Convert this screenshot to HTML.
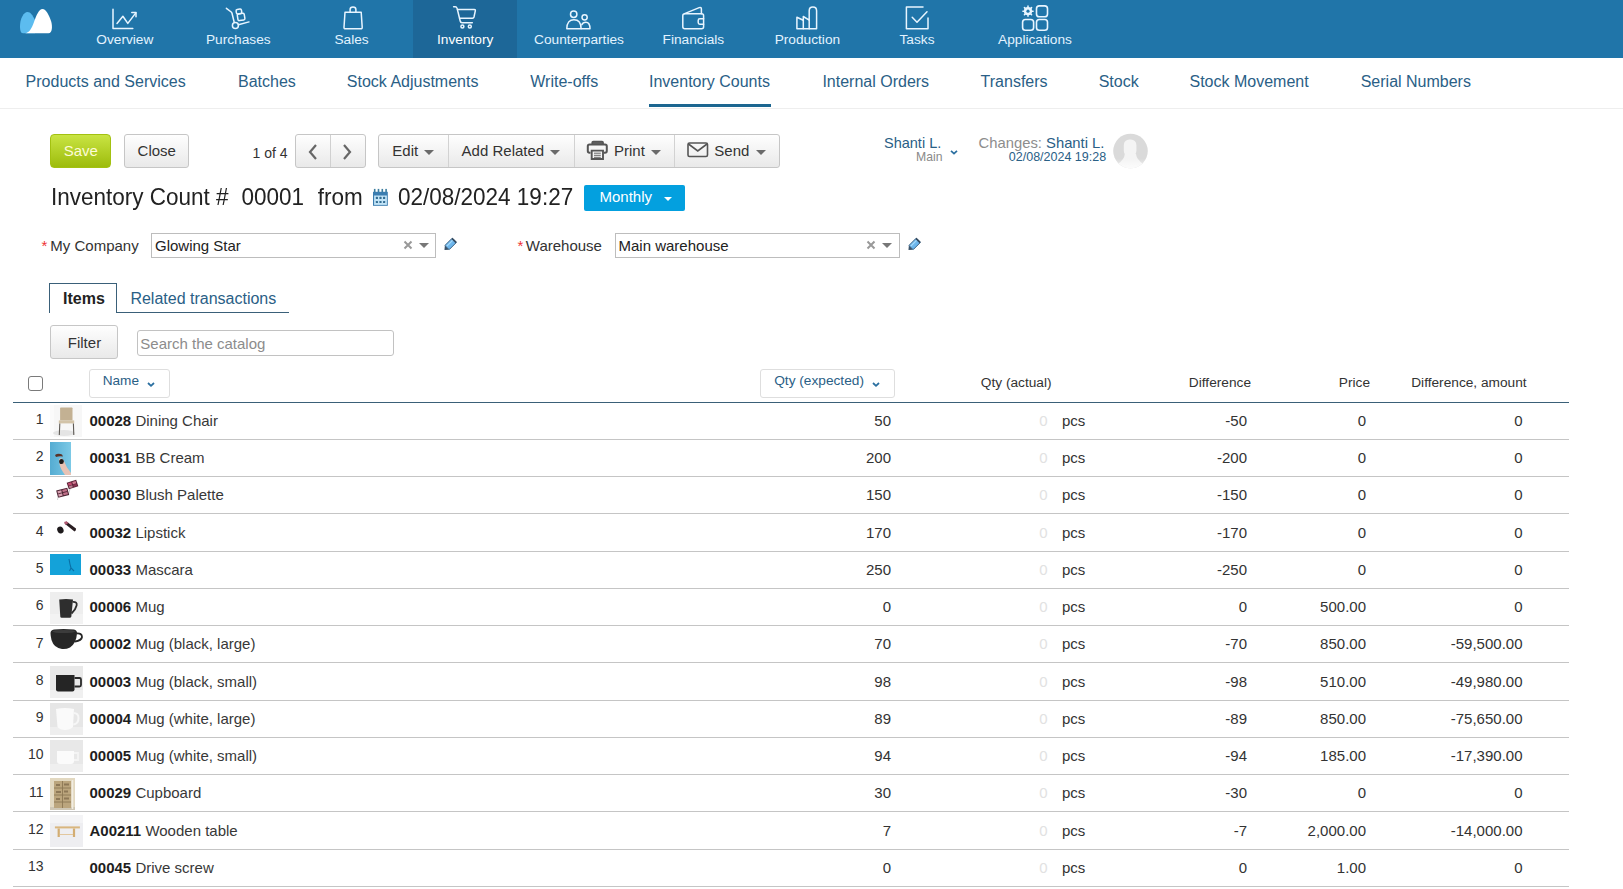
<!DOCTYPE html>
<html><head><meta charset="utf-8">
<style>
html,body{margin:0;padding:0;background:#fff;}
body{width:1623px;height:889px;overflow:hidden;position:relative;font-family:"Liberation Sans",sans-serif;color:#333;}
.a{position:absolute;line-height:1;white-space:nowrap;}
#hdr{position:absolute;left:0;top:0;width:1623px;height:58px;background:#2075a9;}
#act{position:absolute;left:413px;top:0;width:104px;height:58px;background:#1d6798;}
.nt{position:absolute;top:33.2px;font-size:13.7px;line-height:1;color:#e3f3ff;white-space:nowrap;transform:translateX(-50%);}
.ic{position:absolute;top:5px;width:26px;height:26px;overflow:visible;}
.ic *{fill:none;stroke:#e8f5ff;stroke-width:1.5;stroke-linecap:round;stroke-linejoin:round;}
.sn{position:absolute;top:74px;font-size:16px;line-height:1;color:#2a6086;white-space:nowrap;}
#snb{position:absolute;left:0;top:108px;width:1623px;height:1px;background:#eeeeee;}
.btn{position:absolute;box-sizing:border-box;border:1px solid #c6c6c6;border-radius:3px;background:linear-gradient(#fefefe,#e9e9e9);}
.car{position:absolute;width:0;height:0;border-left:5px solid transparent;border-right:5px solid transparent;border-top:5px solid #6a6a6a;}
.r{text-align:right;}
.bt{position:absolute;font-size:15px;line-height:1;color:#333;white-space:nowrap;}
</style></head><body>
<div id="hdr"></div>
<div id="act"></div>
<!-- logo -->
<svg style="position:absolute;left:20px;top:9px;width:33px;height:25px" viewBox="0 0 33 25">
<path d="M3,24.2 C0.5,24.2 0,21 0,17 C0,10 3.5,3 7.6,3 C10.5,3 12.5,6 15,11 L15,24.2 Z" fill="#5cbcef"/>
<path d="M5,24.2 C9,24 11.5,20 14,13 C16.5,6 19,0 22.5,0 C26,0 29,6 31.2,12.5 C32.5,17 32.5,24.2 28.5,24.2 Z" fill="#fff"/>
</svg>
<!-- nav icons -->
<svg class="ic" style="left:112px" viewBox="0 0 26 26"><path d="M1,4.3 V23.6 H20.8"/><path d="M5,18.4 L10.9,11.3 L15.8,18.4 L23.8,7.9"/><path d="M19.8,7.6 H24 V11.8"/></svg>
<svg class="ic" style="left:225px" viewBox="0 0 26 26"><path d="M1.4,3.3 L6.2,7 Q6.8,7.5 7,8.3 L9.2,17.3"/><circle cx="10.4" cy="20.6" r="3"/><path d="M13.4,19.8 L24,16.9"/><g transform="rotate(-9 16 10)"><rect x="11.8" y="3.9" width="5.4" height="4.6" rx="1.3"/><rect x="12.3" y="8.5" width="7" height="6.8" rx="1.3"/></g></svg>
<svg class="ic" style="left:338.6px" viewBox="0 0 26 26"><path d="M6,7.3 H22.2 L23.2,22.3 Q23.3,23.8 21.8,23.8 H6.4 Q4.9,23.8 5,22.3 Z"/><path d="M11.1,7.3 V4.6 Q11.1,2.1 14,2.1 Q16.9,2.1 16.9,4.6 V7.3"/></svg>
<svg class="ic" style="left:452.2px" viewBox="0 0 26 26"><path d="M1.6,1.7 H3.2 Q4.6,1.7 5.1,3.4 L8.2,16 Q8.5,17.7 10,17.7 H20.3"/><path d="M5.5,4.4 H22.3 Q23.6,4.4 23.3,5.8 L22,12 Q21.7,13.2 20.5,13.2 H7.6"/><circle cx="10.4" cy="21.4" r="1.5"/><circle cx="17.8" cy="21.4" r="1.5"/></svg>
<svg class="ic" style="left:566px" viewBox="0 0 26 26"><circle cx="7.7" cy="9.3" r="3.2"/><path d="M0.8,23.8 C0.8,17.5 3.6,14.7 7.95,14.7 C12.3,14.7 15.1,17.5 15.1,23.8 Z"/><circle cx="18.6" cy="12.3" r="2.6"/><path d="M15.3,23.8 H24 C24,19.5 22.6,17.2 19.8,17.2 C18,17.2 16.6,18 15.9,19.6"/></svg>
<svg class="ic" style="left:680.4px" viewBox="0 0 26 26"><rect x="2.8" y="8.8" width="20.8" height="15" rx="2"/><path d="M4.6,8.6 L19.2,2.6 Q21.4,1.9 21.4,4.1 V8.8"/><path d="M23.6,13.7 H19.8 Q18.2,13.7 18.2,15.4 V17.5 Q18.2,19.2 19.8,19.2 H23.6"/></svg>
<svg class="ic" style="left:794.4px" viewBox="0 0 26 26"><path d="M2.9,23.8 V12.3 L9.3,15.2 V11.5 L15.2,15.2 V5.8 Q15.2,2.1 18.9,2.1 Q22.6,2.1 22.6,5.8 V23.8 Z"/><path d="M9.3,15.2 V23.8 M15.2,15.2 V23.8"/></svg>
<svg class="ic" style="left:904px" viewBox="0 0 26 26"><path d="M19,2.1 H2.4 V23.8 H24 V13"/><path d="M8.2,12.3 L13,17.2 L23,6.8"/></svg>
<svg class="ic" style="left:1022px" viewBox="0 0 26 26"><rect x="14.5" y="0.9" width="11" height="10.8" rx="2.8" style="stroke-width:1.6"/><rect x="0.6" y="14.5" width="11" height="10.8" rx="2.8" style="stroke-width:1.6"/><rect x="14.5" y="14.5" width="11" height="10.8" rx="2.8" style="stroke-width:1.6"/>
<g transform="translate(6,6.2)"><circle r="4.1" style="fill:#e8f5ff;stroke:none"/><g style="stroke:#e8f5ff;stroke-width:2.5;stroke-linecap:butt"><path d="M0,-5.1 V5.1 M-5.1,0 H5.1 M-3.6,-3.6 L3.6,3.6 M-3.6,3.6 L3.6,-3.6"/></g><circle r="1.6" style="fill:#2075a9;stroke:none"/></g></svg>
<div class="nt" style="left:124.8px">Overview</div>
<div class="nt" style="left:238.3px">Purchases</div>
<div class="nt" style="left:351.6px">Sales</div>
<div class="nt" style="left:465.2px;color:#fff">Inventory</div>
<div class="nt" style="left:579px">Counterparties</div>
<div class="nt" style="left:693.4px">Financials</div>
<div class="nt" style="left:807.4px">Production</div>
<div class="nt" style="left:917px">Tasks</div>
<div class="nt" style="left:1035px">Applications</div>
<!-- subnav -->
<div class="sn" style="left:25.6px">Products and Services</div>
<div class="sn" style="left:238px">Batches</div>
<div class="sn" style="left:346.8px">Stock Adjustments</div>
<div class="sn" style="left:530.3px">Write-offs</div>
<div class="sn" style="left:649px">Inventory Counts</div>
<div class="sn" style="left:822.4px">Internal Orders</div>
<div class="sn" style="left:980.6px">Transfers</div>
<div class="sn" style="left:1098.7px">Stock</div>
<div class="sn" style="left:1189.5px">Stock Movement</div>
<div class="sn" style="left:1360.7px">Serial Numbers</div>
<div style="position:absolute;left:649px;top:104px;width:122px;height:3px;background:#1c6690"></div>
<div id="snb"></div>
<!--TOOLBAR-->
<div style="position:absolute;left:50px;top:134px;width:61px;height:34px;box-sizing:border-box;border:1px solid #a3c111;border-radius:4px;background:linear-gradient(#c9e443,#9dbc0c)"></div>
<div class="bt" style="left:63.7px;top:143px;color:#fdfbd6">Save</div>
<div class="btn" style="left:124px;top:134px;width:65px;height:34px"></div>
<div class="bt" style="left:137.6px;top:143px">Close</div>
<div class="a" style="left:252.6px;top:145.6px;font-size:14px;color:#333">1 of 4</div>
<div class="btn" style="left:295px;top:134px;width:71px;height:34px"></div>
<div style="position:absolute;left:330px;top:135px;width:1px;height:32px;background:#d0d0d0"></div>
<svg style="position:absolute;left:306px;top:143px;width:14px;height:18px" viewBox="0 0 14 18"><path d="M10,2 L4,9 L10,16" fill="none" stroke="#666" stroke-width="2.2"/></svg>
<svg style="position:absolute;left:340px;top:143px;width:14px;height:18px" viewBox="0 0 14 18"><path d="M4,2 L10,9 L4,16" fill="none" stroke="#666" stroke-width="2.2"/></svg>
<div class="btn" style="left:378px;top:134px;width:402px;height:34px"></div>
<div style="position:absolute;left:448px;top:135px;width:1px;height:32px;background:#d2d2d2"></div>
<div style="position:absolute;left:574px;top:135px;width:1px;height:32px;background:#d2d2d2"></div>
<div style="position:absolute;left:674px;top:135px;width:1px;height:32px;background:#d2d2d2"></div>
<div class="bt" style="left:392.3px;top:143.3px">Edit</div>
<div class="car" style="left:424px;top:150px"></div>
<div class="bt" style="left:461.6px;top:143.3px">Add Related</div>
<div class="car" style="left:550.4px;top:150px"></div>
<svg style="position:absolute;left:586px;top:140px;width:22px;height:21px" viewBox="0 0 22 21"><path d="M6.3,4.2 V2.6 Q6.3,1.6 7.3,1.6 H16 Q17,1.6 17,2.6 V4.2" fill="#666" stroke="#555" stroke-width="1.8"/><path d="M4.5,12.8 H3.6 Q1.8,12.8 1.8,11 V6.2 Q1.8,4.4 3.6,4.4 H19 Q20.8,4.4 20.8,6.2 V11 Q20.8,12.8 19,12.8 H18" fill="none" stroke="#555" stroke-width="2"/><path d="M5.7,10.6 H17 V19 H5.7 Z" fill="#f4f4f4" stroke="#555" stroke-width="1.9"/><path d="M8,13.2 H14.8 M8,15.3 H14.8 M8,17.3 H14.8" stroke="#666" stroke-width="1"/></svg>
<div class="bt" style="left:614px;top:143.3px">Print</div>
<div class="car" style="left:651px;top:150px"></div>
<svg style="position:absolute;left:687px;top:142px;width:22px;height:16px" viewBox="0 0 22 16"><rect x="1" y="1" width="19.5" height="13.5" rx="1.5" fill="none" stroke="#555" stroke-width="1.6"/><path d="M1.5,2 L10.75,9 L20,2" fill="none" stroke="#555" stroke-width="1.6"/></svg>
<div class="bt" style="left:714.3px;top:143.3px">Send</div>
<div class="car" style="left:756px;top:150px"></div>
<div class="a" style="left:884px;top:136px;font-size:14.5px;color:#2a6086">Shanti L.</div>
<div class="a" style="left:916px;top:151px;font-size:12.2px;color:#8a8a8a">Main</div>
<svg style="position:absolute;left:949px;top:148.5px;width:10px;height:7px" viewBox="0 0 10 7"><path d="M2,1.8 L5,4.6 L8,1.8" fill="none" stroke="#2a6fa0" stroke-width="1.7"/></svg>
<div class="a" style="left:978.6px;top:135.8px;font-size:14.8px;color:#8d8d8d">Changes: <span style="color:#2a6086">Shanti L.</span></div>
<div class="a" style="left:1008.8px;top:151.2px;font-size:12.5px;color:#2a6086">02/08/2024 19:28</div>
<svg style="position:absolute;left:1112px;top:133px;width:37px;height:37px" viewBox="0 0 37 37"><defs><clipPath id="avc"><circle cx="18.5" cy="18" r="17.3"/></clipPath><linearGradient id="avg" x1="0" y1="0" x2="0" y2="1"><stop offset="0" stop-color="#fff" stop-opacity="0"/><stop offset="0.7" stop-color="#fff" stop-opacity="0"/><stop offset="1" stop-color="#fff" stop-opacity="0.85"/></linearGradient></defs>
<g clip-path="url(#avc)"><rect width="37" height="37" fill="#dadada"/><rect x="11.8" y="6.5" width="12.6" height="17" rx="5.5" fill="#f4f4f4"/><path d="M12.8,21 Q12.5,26 6,31 Q4,36 18.5,37 Q33,36 31,31 Q24.5,26 24,21 Z" fill="#f4f4f4"/><rect width="37" height="37" fill="url(#avg)"/></g></svg>

<!--FORM-->
<div class="a" style="left:51px;top:186px;font-size:22.5px;color:#222;transform:scaleY(1.1);transform-origin:0 10.3px">Inventory Count #</div>
<div class="a" style="left:241.5px;top:186px;font-size:22.5px;color:#222;transform:scaleY(1.1);transform-origin:0 10.3px">00001</div>
<div class="a" style="left:317.7px;top:186px;font-size:22.5px;color:#222;transform:scaleY(1.1);transform-origin:0 10.3px">from</div>
<svg style="position:absolute;left:373px;top:188px;width:15px;height:18px" viewBox="0 0 15 18"><rect x="0" y="3.8" width="14.8" height="14" fill="#3b7db0"/><rect x="1.1" y="7.5" width="12.8" height="9.4" fill="#c2e4f7"/><g fill="#3b7d9f"><rect x="0.9" y="0.9" width="1.6" height="3.2"/><rect x="4.7" y="0.9" width="1.6" height="3.2"/><rect x="8.5" y="0.9" width="1.6" height="3.2"/><rect x="12.3" y="0.9" width="1.6" height="3.2"/></g><g fill="#336d93"><rect x="2.8" y="8.8" width="2.2" height="2.2" rx="0.6"/><rect x="6.4" y="8.8" width="2.2" height="2.2" rx="0.6"/><rect x="10" y="8.8" width="2.2" height="2.2" rx="0.6"/><rect x="2.8" y="12.9" width="2.2" height="2.2" rx="0.6"/><rect x="6.4" y="12.9" width="2.2" height="2.2" rx="0.6"/><rect x="10" y="12.9" width="2.2" height="2.2" rx="0.6"/></g></svg>
<div class="a" style="left:398px;top:186px;font-size:22.5px;color:#222;transform:scaleY(1.1);transform-origin:0 10.3px">02/08/2024 19:27</div>
<div style="position:absolute;left:584px;top:185px;width:101px;height:26px;background:#03a0df;border-radius:2px"></div>
<div class="a" style="left:599.5px;top:189px;font-size:15px;color:#fff">Monthly</div>
<div class="car" style="left:663.5px;top:196.5px;border-top-color:#fff;border-left-width:4.5px;border-right-width:4.5px;border-top-width:4.5px"></div>
<div class="a" style="left:41.4px;top:238px;font-size:15px;color:#e33">*</div>
<div class="a" style="left:50.3px;top:238px;font-size:15px;color:#333">My Company</div>
<div style="position:absolute;left:151px;top:233px;width:285px;height:25px;box-sizing:border-box;border:1px solid #bdbdbd;background:#fff"></div>
<div class="a" style="left:155px;top:238px;font-size:15px;color:#222">Glowing Star</div>
<svg style="position:absolute;left:403px;top:240px;width:10px;height:10px" viewBox="0 0 10 10"><path d="M1.5,1.5 L8.5,8.5 M8.5,1.5 L1.5,8.5" stroke="#999" stroke-width="2"/></svg>
<div class="car" style="left:419px;top:242.5px;border-top-color:#777;border-top-width:5px"></div>
<svg style="position:absolute;left:436px;top:230px;width:30px;height:30px" viewBox="0 0 30 30"><g transform="translate(13.8,14.8) rotate(-45)"><defs></defs><rect x="-4" y="-3" width="10.5" height="6" rx="0.8" fill="#6db6ec" stroke="#3a5f80" stroke-width="0.9"/><path d="M-4,-3 L-7.5,0 L-4,3 Z" fill="#38526a"/><path d="M-3,-1.2 H5.5" stroke="#a9dcfa" stroke-width="1.2"/><rect x="5.2" y="-3" width="1.6" height="6" fill="#34495e"/></g></svg>
<div class="a" style="left:517.6px;top:238px;font-size:15px;color:#e33">*</div>
<div class="a" style="left:525.8px;top:238px;font-size:15px;color:#333">Warehouse</div>
<div style="position:absolute;left:615px;top:233px;width:285px;height:25px;box-sizing:border-box;border:1px solid #bdbdbd;background:#fff"></div>
<div class="a" style="left:618.5px;top:238px;font-size:15px;color:#222">Main warehouse</div>
<svg style="position:absolute;left:866px;top:240px;width:10px;height:10px" viewBox="0 0 10 10"><path d="M1.5,1.5 L8.5,8.5 M8.5,1.5 L1.5,8.5" stroke="#999" stroke-width="2"/></svg>
<div class="car" style="left:882px;top:242.5px;border-top-color:#777;border-top-width:5px"></div>
<svg style="position:absolute;left:900px;top:230px;width:30px;height:30px" viewBox="0 0 30 30"><g transform="translate(13.8,14.8) rotate(-45)"><defs></defs><rect x="-4" y="-3" width="10.5" height="6" rx="0.8" fill="#6db6ec" stroke="#3a5f80" stroke-width="0.9"/><path d="M-4,-3 L-7.5,0 L-4,3 Z" fill="#38526a"/><path d="M-3,-1.2 H5.5" stroke="#a9dcfa" stroke-width="1.2"/><rect x="5.2" y="-3" width="1.6" height="6" fill="#34495e"/></g></svg>
<!-- tabs -->
<div style="position:absolute;left:49px;top:283px;width:68px;height:30px;box-sizing:border-box;border:1px solid #3a6079;border-bottom:none;background:#fff"></div>
<div style="position:absolute;left:116px;top:312px;width:173px;height:1px;background:#3a6079"></div>
<div class="a" style="left:63px;top:291px;font-size:16px;font-weight:bold;color:#222">Items</div>
<div class="a" style="left:130.4px;top:291px;font-size:16px;color:#2a6086">Related transactions</div>
<div class="btn" style="left:50px;top:325px;width:68px;height:34px"></div>
<div class="bt" style="left:67.8px;top:335px">Filter</div>
<div style="position:absolute;left:137px;top:330px;width:257px;height:26px;box-sizing:border-box;border:1px solid #c2c2c2;border-radius:3px;background:#fff"></div>
<div class="a" style="left:140.3px;top:336px;font-size:15px;color:#8c8c8c">Search the catalog</div>
<!-- header -->
<div style="position:absolute;left:28px;top:376px;width:15px;height:15px;box-sizing:border-box;border:1px solid #7a7a7a;border-radius:3px;background:#fff"></div>
<div style="position:absolute;left:89px;top:369px;width:81px;height:29px;box-sizing:border-box;border:1px solid #dedede;border-radius:3px"></div>
<div class="a" style="left:102.7px;top:374px;font-size:13.6px;color:#2a6086">Name</div>
<svg style="position:absolute;left:146px;top:381px;width:10px;height:7px" viewBox="0 0 10 7"><path d="M2,2 L5,4.8 L8,2" fill="none" stroke="#2a6fa0" stroke-width="1.8"/></svg>
<div style="position:absolute;left:760px;top:369px;width:135px;height:29px;box-sizing:border-box;border:1px solid #dedede;border-radius:3px"></div>
<div class="a" style="left:774.2px;top:374px;font-size:13.7px;color:#2a6086">Qty (expected)</div>
<svg style="position:absolute;left:871px;top:381px;width:10px;height:7px" viewBox="0 0 10 7"><path d="M2,2 L5,4.8 L8,2" fill="none" stroke="#2a6fa0" stroke-width="1.8"/></svg>
<div class="a" style="left:980.8px;top:375.5px;font-size:13.7px;color:#333">Qty (actual)</div>
<div class="a r" style="right:372px;top:375.5px;font-size:13.7px;color:#333">Difference</div>
<div class="a r" style="right:253px;top:375.5px;font-size:13.7px;color:#333">Price</div>
<div class="a r" style="right:96.4px;top:375.5px;font-size:13.7px;color:#333">Difference, amount</div>
<div style="position:absolute;left:13px;top:402px;width:1556px;height:1px;background:#3a6078"></div>

<!--TABLE-->
<div style="position:absolute;left:13px;top:439.00px;width:1556px;height:1px;background:#c5c5c5"></div>
<div class="a r" style="right:1579.5px;top:412.15px;font-size:14px">1</div>
<div class="a" style="left:89.5px;top:412.90px;font-size:15px;color:#383838"><b style="color:#1e1e1e">00028</b> Dining Chair</div>
<div class="a r" style="right:732.0px;top:412.90px;font-size:15px">50</div>
<div class="a r" style="right:575.5px;top:412.90px;font-size:15px;color:#e2e2e2">0</div>
<div class="a" style="left:1062px;top:412.90px;font-size:15px">pcs</div>
<div class="a r" style="right:376.0px;top:412.90px;font-size:15px">-50</div>
<div class="a r" style="right:257.0px;top:412.90px;font-size:15px">0</div>
<div class="a r" style="right:100.5px;top:412.90px;font-size:15px">0</div>
<div style="position:absolute;left:13px;top:476.00px;width:1556px;height:1px;background:#c5c5c5"></div>
<div class="a r" style="right:1579.5px;top:449.40px;font-size:14px">2</div>
<div class="a" style="left:89.5px;top:450.15px;font-size:15px;color:#383838"><b style="color:#1e1e1e">00031</b> BB Cream</div>
<div class="a r" style="right:732.0px;top:450.15px;font-size:15px">200</div>
<div class="a r" style="right:575.5px;top:450.15px;font-size:15px;color:#e2e2e2">0</div>
<div class="a" style="left:1062px;top:450.15px;font-size:15px">pcs</div>
<div class="a r" style="right:376.0px;top:450.15px;font-size:15px">-200</div>
<div class="a r" style="right:257.0px;top:450.15px;font-size:15px">0</div>
<div class="a r" style="right:100.5px;top:450.15px;font-size:15px">0</div>
<div style="position:absolute;left:13px;top:513.00px;width:1556px;height:1px;background:#c5c5c5"></div>
<div class="a r" style="right:1579.5px;top:486.65px;font-size:14px">3</div>
<div class="a" style="left:89.5px;top:487.40px;font-size:15px;color:#383838"><b style="color:#1e1e1e">00030</b> Blush Palette</div>
<div class="a r" style="right:732.0px;top:487.40px;font-size:15px">150</div>
<div class="a r" style="right:575.5px;top:487.40px;font-size:15px;color:#e2e2e2">0</div>
<div class="a" style="left:1062px;top:487.40px;font-size:15px">pcs</div>
<div class="a r" style="right:376.0px;top:487.40px;font-size:15px">-150</div>
<div class="a r" style="right:257.0px;top:487.40px;font-size:15px">0</div>
<div class="a r" style="right:100.5px;top:487.40px;font-size:15px">0</div>
<div style="position:absolute;left:13px;top:551.00px;width:1556px;height:1px;background:#c5c5c5"></div>
<div class="a r" style="right:1579.5px;top:523.90px;font-size:14px">4</div>
<div class="a" style="left:89.5px;top:524.65px;font-size:15px;color:#383838"><b style="color:#1e1e1e">00032</b> Lipstick</div>
<div class="a r" style="right:732.0px;top:524.65px;font-size:15px">170</div>
<div class="a r" style="right:575.5px;top:524.65px;font-size:15px;color:#e2e2e2">0</div>
<div class="a" style="left:1062px;top:524.65px;font-size:15px">pcs</div>
<div class="a r" style="right:376.0px;top:524.65px;font-size:15px">-170</div>
<div class="a r" style="right:257.0px;top:524.65px;font-size:15px">0</div>
<div class="a r" style="right:100.5px;top:524.65px;font-size:15px">0</div>
<div style="position:absolute;left:13px;top:588.00px;width:1556px;height:1px;background:#c5c5c5"></div>
<div class="a r" style="right:1579.5px;top:561.15px;font-size:14px">5</div>
<div class="a" style="left:89.5px;top:561.90px;font-size:15px;color:#383838"><b style="color:#1e1e1e">00033</b> Mascara</div>
<div class="a r" style="right:732.0px;top:561.90px;font-size:15px">250</div>
<div class="a r" style="right:575.5px;top:561.90px;font-size:15px;color:#e2e2e2">0</div>
<div class="a" style="left:1062px;top:561.90px;font-size:15px">pcs</div>
<div class="a r" style="right:376.0px;top:561.90px;font-size:15px">-250</div>
<div class="a r" style="right:257.0px;top:561.90px;font-size:15px">0</div>
<div class="a r" style="right:100.5px;top:561.90px;font-size:15px">0</div>
<div style="position:absolute;left:13px;top:625.00px;width:1556px;height:1px;background:#c5c5c5"></div>
<div class="a r" style="right:1579.5px;top:598.40px;font-size:14px">6</div>
<div class="a" style="left:89.5px;top:599.15px;font-size:15px;color:#383838"><b style="color:#1e1e1e">00006</b> Mug</div>
<div class="a r" style="right:732.0px;top:599.15px;font-size:15px">0</div>
<div class="a r" style="right:575.5px;top:599.15px;font-size:15px;color:#e2e2e2">0</div>
<div class="a" style="left:1062px;top:599.15px;font-size:15px">pcs</div>
<div class="a r" style="right:376.0px;top:599.15px;font-size:15px">0</div>
<div class="a r" style="right:257.0px;top:599.15px;font-size:15px">500.00</div>
<div class="a r" style="right:100.5px;top:599.15px;font-size:15px">0</div>
<div style="position:absolute;left:13px;top:662.00px;width:1556px;height:1px;background:#c5c5c5"></div>
<div class="a r" style="right:1579.5px;top:635.65px;font-size:14px">7</div>
<div class="a" style="left:89.5px;top:636.40px;font-size:15px;color:#383838"><b style="color:#1e1e1e">00002</b> Mug (black, large)</div>
<div class="a r" style="right:732.0px;top:636.40px;font-size:15px">70</div>
<div class="a r" style="right:575.5px;top:636.40px;font-size:15px;color:#e2e2e2">0</div>
<div class="a" style="left:1062px;top:636.40px;font-size:15px">pcs</div>
<div class="a r" style="right:376.0px;top:636.40px;font-size:15px">-70</div>
<div class="a r" style="right:257.0px;top:636.40px;font-size:15px">850.00</div>
<div class="a r" style="right:100.5px;top:636.40px;font-size:15px">-59,500.00</div>
<div style="position:absolute;left:13px;top:700.00px;width:1556px;height:1px;background:#c5c5c5"></div>
<div class="a r" style="right:1579.5px;top:672.90px;font-size:14px">8</div>
<div class="a" style="left:89.5px;top:673.65px;font-size:15px;color:#383838"><b style="color:#1e1e1e">00003</b> Mug (black, small)</div>
<div class="a r" style="right:732.0px;top:673.65px;font-size:15px">98</div>
<div class="a r" style="right:575.5px;top:673.65px;font-size:15px;color:#e2e2e2">0</div>
<div class="a" style="left:1062px;top:673.65px;font-size:15px">pcs</div>
<div class="a r" style="right:376.0px;top:673.65px;font-size:15px">-98</div>
<div class="a r" style="right:257.0px;top:673.65px;font-size:15px">510.00</div>
<div class="a r" style="right:100.5px;top:673.65px;font-size:15px">-49,980.00</div>
<div style="position:absolute;left:13px;top:737.00px;width:1556px;height:1px;background:#c5c5c5"></div>
<div class="a r" style="right:1579.5px;top:710.15px;font-size:14px">9</div>
<div class="a" style="left:89.5px;top:710.90px;font-size:15px;color:#383838"><b style="color:#1e1e1e">00004</b> Mug (white, large)</div>
<div class="a r" style="right:732.0px;top:710.90px;font-size:15px">89</div>
<div class="a r" style="right:575.5px;top:710.90px;font-size:15px;color:#e2e2e2">0</div>
<div class="a" style="left:1062px;top:710.90px;font-size:15px">pcs</div>
<div class="a r" style="right:376.0px;top:710.90px;font-size:15px">-89</div>
<div class="a r" style="right:257.0px;top:710.90px;font-size:15px">850.00</div>
<div class="a r" style="right:100.5px;top:710.90px;font-size:15px">-75,650.00</div>
<div style="position:absolute;left:13px;top:774.00px;width:1556px;height:1px;background:#c5c5c5"></div>
<div class="a r" style="right:1579.5px;top:747.40px;font-size:14px">10</div>
<div class="a" style="left:89.5px;top:748.15px;font-size:15px;color:#383838"><b style="color:#1e1e1e">00005</b> Mug (white, small)</div>
<div class="a r" style="right:732.0px;top:748.15px;font-size:15px">94</div>
<div class="a r" style="right:575.5px;top:748.15px;font-size:15px;color:#e2e2e2">0</div>
<div class="a" style="left:1062px;top:748.15px;font-size:15px">pcs</div>
<div class="a r" style="right:376.0px;top:748.15px;font-size:15px">-94</div>
<div class="a r" style="right:257.0px;top:748.15px;font-size:15px">185.00</div>
<div class="a r" style="right:100.5px;top:748.15px;font-size:15px">-17,390.00</div>
<div style="position:absolute;left:13px;top:811.00px;width:1556px;height:1px;background:#c5c5c5"></div>
<div class="a r" style="right:1579.5px;top:784.65px;font-size:14px">11</div>
<div class="a" style="left:89.5px;top:785.40px;font-size:15px;color:#383838"><b style="color:#1e1e1e">00029</b> Cupboard</div>
<div class="a r" style="right:732.0px;top:785.40px;font-size:15px">30</div>
<div class="a r" style="right:575.5px;top:785.40px;font-size:15px;color:#e2e2e2">0</div>
<div class="a" style="left:1062px;top:785.40px;font-size:15px">pcs</div>
<div class="a r" style="right:376.0px;top:785.40px;font-size:15px">-30</div>
<div class="a r" style="right:257.0px;top:785.40px;font-size:15px">0</div>
<div class="a r" style="right:100.5px;top:785.40px;font-size:15px">0</div>
<div style="position:absolute;left:13px;top:849.00px;width:1556px;height:1px;background:#c5c5c5"></div>
<div class="a r" style="right:1579.5px;top:821.90px;font-size:14px">12</div>
<div class="a" style="left:89.5px;top:822.65px;font-size:15px;color:#383838"><b style="color:#1e1e1e">A00211</b> Wooden table</div>
<div class="a r" style="right:732.0px;top:822.65px;font-size:15px">7</div>
<div class="a r" style="right:575.5px;top:822.65px;font-size:15px;color:#e2e2e2">0</div>
<div class="a" style="left:1062px;top:822.65px;font-size:15px">pcs</div>
<div class="a r" style="right:376.0px;top:822.65px;font-size:15px">-7</div>
<div class="a r" style="right:257.0px;top:822.65px;font-size:15px">2,000.00</div>
<div class="a r" style="right:100.5px;top:822.65px;font-size:15px">-14,000.00</div>
<div style="position:absolute;left:13px;top:886.00px;width:1556px;height:1px;background:#c5c5c5"></div>
<div class="a r" style="right:1579.5px;top:859.15px;font-size:14px">13</div>
<div class="a" style="left:89.5px;top:859.90px;font-size:15px;color:#383838"><b style="color:#1e1e1e">00045</b> Drive screw</div>
<div class="a r" style="right:732.0px;top:859.90px;font-size:15px">0</div>
<div class="a r" style="right:575.5px;top:859.90px;font-size:15px;color:#e2e2e2">0</div>
<div class="a" style="left:1062px;top:859.90px;font-size:15px">pcs</div>
<div class="a r" style="right:376.0px;top:859.90px;font-size:15px">0</div>
<div class="a r" style="right:257.0px;top:859.90px;font-size:15px">1.00</div>
<div class="a r" style="right:100.5px;top:859.90px;font-size:15px">0</div>
<!--/TABLE-->
<!--THUMBS-->
<svg style="position:absolute;left:50px;top:405px;width:32px;height:32px;filter:blur(0.35px)" viewBox="0 0 32 32">
<rect width="32" height="32" fill="#f7f7f7"/><rect x="0" y="0" width="4" height="32" fill="#fbfbfb"/>
<ellipse cx="14" cy="28" rx="11" ry="3" fill="#e4e4e4"/>
<path d="M10.1,3.2 Q10.1,2.6 10.8,2.6 H21.8 Q22.5,2.6 22.5,3.2 V15.4 H10.1 Z" fill="#c3b193"/>
<path d="M8.8,15.4 H24.2 V18.4 H8.8 Z" fill="#d2c3a8"/>
<path d="M9.8,18.4 L9.3,30 M23.4,18.4 L23.8,30" stroke="#5e5a55" stroke-width="1.1"/>
</svg>
<svg style="position:absolute;left:50px;top:442px;width:21px;height:33px;filter:blur(0.3px)" viewBox="0 0 21 33">
<defs><linearGradient id="bbg" x1="0" y1="0" x2="1" y2="0"><stop offset="0" stop-color="#55acd2"/><stop offset="1" stop-color="#7cc9e6"/></linearGradient></defs>
<rect width="21" height="33" fill="url(#bbg)"/>
<path d="M9,17 Q12,15 14,19 Q16,25 21,31 V33 H15 Q10,26 9.5,22 Z" fill="#e7c3b5"/>
<path d="M5,13 Q8,11 12,12.5 L13,14.5 Q9,14 6,15 Z" fill="#5a3328"/>
<ellipse cx="11.5" cy="19.5" rx="2.3" ry="2.6" fill="#1c1c1c"/>
</svg>
<svg style="position:absolute;left:50px;top:477px;width:32px;height:26px;filter:blur(0.3px)" viewBox="0 0 32 26">
<g transform="rotate(-18 22.5 7.5)"><rect x="17.5" y="4" width="10" height="7" fill="#5a2236"/><rect x="18.5" y="5" width="3.5" height="2.5" fill="#c04a6e"/><rect x="23" y="5" width="3.5" height="2.5" fill="#d27a92"/><rect x="18.5" y="8" width="3.5" height="2.2" fill="#b88090"/><rect x="23" y="8" width="3.5" height="2.2" fill="#8a3050"/></g>
<path d="M20,12 L18.5,17" stroke="#bbb" stroke-width="0.8"/>
<g transform="rotate(-15 12.7 16)"><rect x="7" y="12" width="11.5" height="7.5" fill="#4a2232"/><rect x="8" y="13" width="4" height="5.5" fill="#d8a0b0"/><rect x="13" y="13" width="4.5" height="5.5" fill="#c07088"/><path d="M8,15.7 H17.5" stroke="#4a2232" stroke-width="0.8"/></g>
<path d="M8,20 L7.5,23" stroke="#ccc" stroke-width="0.8"/>
</svg>
<svg style="position:absolute;left:50px;top:517px;width:32px;height:22px;filter:blur(0.35px)" viewBox="0 0 32 22">
<ellipse cx="10.4" cy="13" rx="3.1" ry="3.5" fill="#1e1a1c" transform="rotate(-25 10.4 13)"/>
<path d="M14.5,6.5 L16.5,4.5 L26,11.5 Q26.5,13.5 24.5,14.5 Z" fill="#2a1e22"/>
<path d="M14,5 L16.5,4.2 L18.5,6 L15.5,8 Z" fill="#b05a72"/>
</svg>
<svg style="position:absolute;left:50px;top:554px;width:31px;height:21px;filter:blur(0.3px)" viewBox="0 0 31 21">
<rect width="31" height="21" fill="#14a2d9"/><path d="M19,5 Q20,11 21,14 L24,17 M21,14 L19.5,17" stroke="#0b6fa5" stroke-width="1.1" fill="none"/>
</svg>
<svg style="position:absolute;left:50px;top:591.5px;width:33px;height:32px;filter:blur(0.3px)" viewBox="0 0 33 32">
<rect width="33" height="32" fill="#eeeeee"/><rect x="0" y="22" width="33" height="10" fill="#f3f3f3"/>
<path d="M9.2,7.5 Q16,6.5 23,7.5 L21.3,24.8 Q21,25.8 19.8,25.8 H11.6 Q10.4,25.8 10.3,24.8 Z" fill="#2e2e2e"/>
<path d="M22.6,9.8 Q27.5,9.5 26.6,13.5 Q25.5,18 21.5,21.5" stroke="#2e2e2e" stroke-width="1.8" fill="none"/>
</svg>
<svg style="position:absolute;left:50px;top:628px;width:33px;height:22px;filter:blur(0.3px)" viewBox="0 0 33 22">
<path d="M0.5,5 Q0.5,2 4,1.5 Q13,0.3 24,1.5 Q27,2 27,5 Q26.5,15 20,19.5 Q16,21.5 12,21 Q4,20 1.5,12 Q0.5,8 0.5,5Z" fill="#262626"/>
<path d="M26.5,5.5 Q32,5 32,9 Q31.5,12.5 25,13.5" stroke="#262626" stroke-width="1.8" fill="none"/>
<ellipse cx="13.8" cy="3.5" rx="11.5" ry="1.6" fill="#3c3c3c"/>
</svg>
<svg style="position:absolute;left:50px;top:666px;width:33px;height:32px;filter:blur(0.3px)" viewBox="0 0 33 32">
<rect width="33" height="32" fill="#e9e9e9"/><rect y="24" width="33" height="8" fill="#f0f0f0"/>
<path d="M6,9 H24.5 V23.5 Q24.5,25.5 22.5,25.5 H8 Q6,25.5 6,23.5Z" fill="#252525"/>
<path d="M24.5,12 H29.5 Q31,12 31,13.5 V19 Q31,20.5 29.5,20.5 H24.5" stroke="#2a2a2a" stroke-width="1.8" fill="none"/>
</svg>
<svg style="position:absolute;left:50px;top:703px;width:33px;height:32px;filter:blur(0.3px)" viewBox="0 0 33 32">
<rect width="33" height="32" fill="#e6e6e6"/><rect y="24" width="33" height="8" fill="#eeeeee"/>
<path d="M6,6 Q15,4 24,6 L23,24 Q20,27 15,27 Q10,27 7.5,24 Z" fill="#fafafa"/>
<path d="M23.5,10 Q28.5,10 28.5,15 Q28.5,21 23.2,21.5" stroke="#f6f6f6" stroke-width="2" fill="none"/>
</svg>
<svg style="position:absolute;left:50px;top:740px;width:33px;height:32px;filter:blur(0.3px)" viewBox="0 0 33 32">
<rect width="33" height="32" fill="#e8e8e8"/><rect y="24" width="33" height="8" fill="#efefef"/>
<path d="M7,11 H24 V21 Q24,24 21,24 H10 Q7,24 7,21Z" fill="#fbfbfb"/>
<path d="M24,13 H28 V20 H24" stroke="#f4f4f4" stroke-width="1.8" fill="none"/>
</svg>
<svg style="position:absolute;left:50px;top:778px;width:25px;height:32px;filter:blur(0.3px)" viewBox="0 0 25 32">
<rect width="25" height="32" fill="#e2d8c0"/><rect x="0" y="29" width="25" height="3" fill="#cfc7b5"/>
<rect x="4" y="3" width="17" height="27" fill="#bba57d"/>
<path d="M12.5,3 V30 M4,10 H21 M4,17 H21 M4,24 H21" stroke="#8d7855" stroke-width="0.9" fill="none"/>
<path d="M6,7 H10 M14,6.5 H19 M6,14 H11 M14,13.5 H18 M6,21 H10 M14,20.5 H19" stroke="#7a6647" stroke-width="2" opacity="0.7"/>
<path d="M22.5,2 V31" stroke="#f2ede2" stroke-width="1.5"/>
</svg>
<svg style="position:absolute;left:50px;top:814.5px;width:33px;height:32px;filter:blur(0.3px)" viewBox="0 0 33 32">
<rect width="33" height="32" fill="#eeeef1"/><rect x="0" y="0" width="33" height="8" fill="#f4f4f6"/>
<rect x="4.9" y="11.4" width="25" height="2" fill="#d9b67f"/>
<path d="M8.7,13.4 V22 M24,13.4 V22" stroke="#d3ad72" stroke-width="2.2"/>
<path d="M10,19.5 H23" stroke="#e2c79e" stroke-width="1"/>
</svg>
<!--/THUMBS-->

</body></html>
